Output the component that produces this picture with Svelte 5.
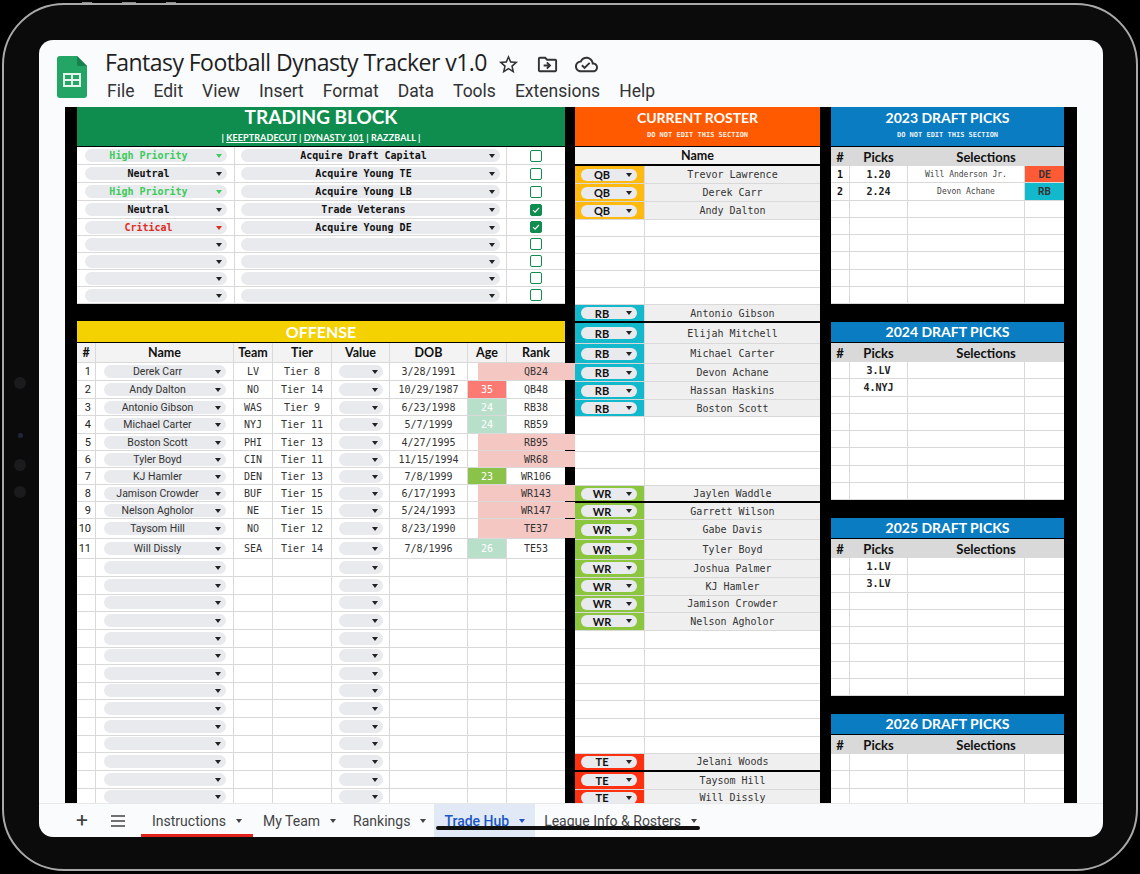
<script>
  // every sheet row from y=147 down, all three panels share these heights
  const rowH = [18,18,18,18,17,17,17,17,17,18,21,20,18,18,17,18,17,17,17,17,17,20,19.5,18,18,17,18,18,17,18,17,18,18,17,18,18,17];

  const menus = ['File','Edit','View','Insert','Format','Data','Tools','Extensions','Help'];

  const block = [
    ['High Priority','Acquire Draft Capital',false,'hi'],
    ['Neutral','Acquire Young TE',false,''],
    ['High Priority','Acquire Young LB',false,'hi'],
    ['Neutral','Trade Veterans',true,''],
    ['Critical','Acquire Young DE',true,'crit'],
    ['','',false,''],['','',false,''],['','',false,''],['','',false,'']
  ];

  const players = [
    ['Derek Carr','LV','Tier 8','3/28/1991',32,'QB24'],
    ['Andy Dalton','NO','Tier 14','10/29/1987',35,'QB48'],
    ['Antonio Gibson','WAS','Tier 9','6/23/1998',24,'RB38'],
    ['Michael Carter','NYJ','Tier 11','5/7/1999',24,'RB59'],
    ['Boston Scott','PHI','Tier 13','4/27/1995',28,'RB95'],
    ['Tyler Boyd','CIN','Tier 11','11/15/1994',28,'WR68'],
    ['KJ Hamler','DEN','Tier 13','7/8/1999',23,'WR106'],
    ['Jamison Crowder','BUF','Tier 15','6/17/1993',29,'WR143'],
    ['Nelson Agholor','NE','Tier 15','5/24/1993',29,'WR147'],
    ['Taysom Hill','NO','Tier 12','8/23/1990',32,'TE37'],
    ['Will Dissly','SEA','Tier 14','7/8/1996',26,'TE53']
  ];
  const offenseRows = rowH.slice(12).map((h, i) => ({ h, p: players[i] }));

  function ageClass(a) {
    if (a >= 35) return 'old';
    if (a >= 28) return 'mid';
    if (a <= 23) return 'young';
    return 'ok';
  }

  const roster = [
    ...['Trevor Lawrence','Derek Carr','Andy Dalton'].map((n) => ['QB', n]),
    ...Array(5).fill(['', '']),
    ...['Antonio Gibson','Elijah Mitchell','Michael Carter','Devon Achane','Hassan Haskins','Boston Scott'].map((n) => ['RB', n]),
    ...Array(4).fill(['', '']),
    ...['Jaylen Waddle','Garrett Wilson','Gabe Davis','Tyler Boyd','Joshua Palmer','KJ Hamler','Jamison Crowder','Nelson Agholor'].map((n) => ['WR', n]),
    ...Array(7).fill(['', '']),
    ...['Jelani Woods','Taysom Hill','Will Dissly'].map((n) => ['TE', n])
  ].map((r, i) => ({ pos: r[0], name: r[1], h: rowH[i + 1], line: i === 8 || i === 18 || i === 33 }));

  const drafts = [
    { year: 2023, note: true, rows: [['1','1.20','Will Anderson Jr.','DE'],['2','2.24','Devon Achane','RB']] },
    { year: 2024, rows: [['','3.LV'],['','4.NYJ']] },
    { year: 2025, rows: [['','1.LV'],['','3.LV']] },
    { year: 2026, rows: [] }
  ];
  const eight = [0,1,2,3,4,5,6,7];

  const tabs = ['Instructions','My Team','Rankings','Trade Hub','League Info & Rosters'];
</script>

{#snippet chip(text, cls)}
  <div class="chip {cls}"><span class="chip-text">{text}</span><i class="arrow"></i></div>
{/snippet}

<div class="device">
  <i class="tick t1"></i><i class="tick t2"></i><i class="tick t3"></i>
  <i class="dot d1"></i><i class="dot d2"></i><i class="dot d3"></i><i class="dot d4"></i>

  <div class="screen">
    <header class="top">
      <svg class="logo" viewBox="0 0 30 42">
        <path d="M3 0h17l10 10v29a3 3 0 0 1-3 3H3a3 3 0 0 1-3-3V3a3 3 0 0 1 3-3z" fill="#23a566"/>
        <path d="M20 0l10 10H22a2 2 0 0 1-2-2z" fill="#17804c"/>
        <path d="M6 17h18v14H6zM8 19v4h6v-4zm8 0v4h6v-4zM8 25v4h6v-4zm8 0v4h6v-4z" fill="#e6f4ec" fill-rule="evenodd"/>
      </svg>
      <div class="top-text">
        <div class="title-row">
          <h1>Fantasy Football Dynasty Tracker v1.0</h1>
          <svg class="tool star" viewBox="0 0 24 24"><path d="M22 9.24l-7.19-.62L12 2 9.19 8.63 2 9.24l5.46 4.73L5.82 21 12 17.27 18.18 21l-1.63-7.03L22 9.24zM12 15.4l-3.76 2.27 1-4.28-3.32-2.88 4.38-.38L12 6.1l1.71 4.04 4.38.38-3.32 2.88 1 4.28L12 15.4z"/></svg>
          <svg class="tool" viewBox="0 0 24 24"><path d="M20 6h-8l-2-2H4c-1.1 0-1.99.9-1.99 2L2 18c0 1.1.9 2 2 2h16c1.1 0 2-.9 2-2V8c0-1.1-.9-2-2-2zm0 12H4V6h5.17l2 2H20v10zm-7.84-6H8v2h4.16l-1.59 1.59L11.99 17 16 13.01 11.99 9l-1.41 1.41L12.16 12z"/></svg>
          <svg class="tool" viewBox="0 0 24 24"><path d="M19.35 10.04C18.67 6.59 15.64 4 12 4 9.11 4 6.6 5.64 5.35 8.04 2.34 8.36 0 10.91 0 14c0 3.31 2.69 6 6 6h13c2.76 0 5-2.24 5-5 0-2.64-2.05-4.78-4.65-4.96zM19 18H6c-2.21 0-4-1.79-4-4 0-2.05 1.53-3.76 3.56-3.97l1.07-.11.5-.95C8.08 7.14 9.94 6 12 6c2.62 0 4.88 1.86 5.39 4.43l.3 1.5 1.53.11c1.56.1 2.78 1.41 2.78 2.96 0 1.65-1.35 3-3 3zm-9-3.82l-2.09-2.09L6.5 13.5 10 17l6.01-6.01-1.41-1.41z"/></svg>
        </div>
        <nav class="menu">
          {#each menus as m}<span>{m}</span>{/each}
        </nav>
      </div>
    </header>

    <main class="sheet">
      <section class="left">
        <div class="band green">
          <div class="band-title">TRADING BLOCK</div>
          <div class="links">| <u>KEEPTRADECUT</u> | <u>DYNASTY 101</u> | RAZZBALL |</div>
        </div>
        <div class="white">
          {#each block as b, i}
            <div class="row trade" style="height: {rowH[i]}px">
              <div class="cell">{@render chip(b[0], 'status ' + b[3])}</div>
              <div class="cell">{@render chip(b[1], 'goal')}</div>
              <div class="cell last">
                <span class="check" class:on={b[2]}>
                  {#if b[2]}<svg viewBox="0 0 12 12"><path d="M2.5 6.2l2.4 2.4 4.6-5" fill="none" stroke="#fff" stroke-width="1.4"/></svg>{/if}
                </span>
              </div>
            </div>
          {/each}
        </div>

        <div class="band yellow offense-title">OFFENSE</div>
        <div class="white">
          <div class="row offense head">
            <div class="cell">#</div><div class="cell">Name</div><div class="cell">Team</div><div class="cell">Tier</div>
            <div class="cell">Value</div><div class="cell">DOB</div><div class="cell">Age</div><div class="cell last">Rank</div>
          </div>
          {#each offenseRows as r, i}
            <div class="row offense" style="height: {r.h}px">
              <div class="cell num">{r.p ? i + 1 : ''}</div>
              <div class="cell">{@render chip(r.p ? r.p[0] : '', 'player')}</div>
              <div class="cell mono">{r.p ? r.p[1] : ''}</div>
              <div class="cell mono">{r.p ? r.p[2] : ''}</div>
              <div class="cell">{@render chip('', 'value')}</div>
              <div class="cell mono">{r.p ? r.p[3] : ''}</div>
              <div class="cell age {r.p ? ageClass(r.p[4]) : ''}">{r.p ? r.p[4] : ''}</div>
              <div class="cell mono last">{r.p ? r.p[5] : ''}</div>
            </div>
          {/each}
        </div>
      </section>

      <section class="mid">
        <div class="band orange">
          <div class="band-title small">CURRENT ROSTER</div>
          <div class="note">DO NOT EDIT THIS SECTION</div>
        </div>
        <div class="white">
          <div class="roster-head">Name</div>
          {#each roster as r}
            <div class="row roster" class:line={r.line} style="height: {r.h}px">
              <div class="cell pos {r.pos}">
                {#if r.pos}{@render chip(r.pos, 'pos-chip')}{/if}
              </div>
              <div class="cell mono last" class:filled={r.pos}>{r.name}</div>
            </div>
          {/each}
        </div>
      </section>

      <section class="right">
        {#each drafts as d}
          <div class="draft">
            <div class="band blue" class:tall={d.note}>
              <div class="band-title small">{d.year} DRAFT PICKS</div>
              {#if d.note}<div class="note">DO NOT EDIT THIS SECTION</div>{/if}
            </div>
            <div class="row picks head">
              <div class="cell">#</div><div class="cell">Picks</div><div class="cell wide">Selections</div>
            </div>
            {#each eight as n}
              {@const p = d.rows[n]}
              <div class="row picks body">
                <div class="cell pick-no">{p ? p[0] : ''}</div>
                <div class="cell pick">{p ? p[1] : ''}</div>
                <div class="cell who">{p && p[2] ? p[2] : ''}</div>
                <div class="cell tag {p && p[3] ? p[3] : ''}">{p && p[3] ? p[3] : ''}</div>
              </div>
            {/each}
          </div>
        {/each}
      </section>
    </main>

    <footer class="tabs">
      <span class="add">+</span>
      <svg class="all" viewBox="0 0 14 12"><path d="M0 1h14M0 6h14M0 11h14" stroke="#444" stroke-width="1.5"/></svg>
      <div class="tab-list">
        {#each tabs as t, i}
          <div class="tab" class:first={i === 0} class:active={t === 'Trade Hub'}>{t}<i class="arrow"></i></div>
        {/each}
      </div>
    </footer>
    <div class="home-bar"></div>
  </div>
</div>

<style>
  :global(body) {
    background: #000;
  }

  .device {
    position: relative;
    box-sizing: border-box;
    width: 1136px;
    height: 868px;
    margin: 3px 2px;
    padding: 35px 33px 32px 35px;
    background: #0b0b0b;
    border: 2px solid #a9a9a9;
    border-radius: 62px;
  }

  .tick {
    position: absolute;
    top: -3px;
    width: 10px;
    height: 1px;
    background: #8a8a8a;
  }
  .t1 { left: 78px; }
  .t2 { left: 118px; width: 14px; }
  .t3 { left: 162px; }

  .dot {
    position: absolute;
    left: 10px;
    width: 12px;
    height: 12px;
    border-radius: 50%;
    background: #1b1b1d;
  }
  .d1 { top: 372px; }
  .d2 { top: 428px; left: 14px; width: 5px; height: 5px; background: #20263a; }
  .d3 { top: 454px; }
  .d4 { top: 481px; }

  .screen {
    position: relative;
    display: flex;
    flex-direction: column;
    height: 100%;
    background: #f9fbfd;
    border-radius: 14px;
    overflow: hidden;
  }

  .top {
    display: flex;
    height: 67px;
    flex: none;
    padding-left: 18px;
    box-sizing: border-box;
  }

  .logo {
    width: 30px;
    height: 42px;
    margin-top: 16px;
    flex: none;
  }

  .top-text {
    margin-left: 18px;
  }

  .title-row {
    display: flex;
    align-items: center;
    height: 24px;
    margin-top: 10px;
  }

  h1 {
    margin: 0;
    width: 392px;
    font: 400 23px/24px "Open Sans", sans-serif;
    letter-spacing: -0.55px;
    color: #1f1f1f;
    white-space: nowrap;
  }

  .tool {
    width: 23px;
    height: 23px;
    margin-right: 16px;
    fill: #333;
    margin-top: 4px;
  }

  .menu {
    display: flex;
    gap: 19px;
    margin: 6px 0 0 2px;
    font: 400 17.5px/22px Roboto, sans-serif;
    color: #333;
  }

  .sheet {
    flex: 1;
    min-height: 0;
    display: flex;
    margin: 0 26px;
    padding: 0 13px 0 12px;
    background: #000;
    overflow: hidden;
  }

  .left { width: 488px; flex: none; }
  .mid { width: 245px; margin-left: 10px; flex: none; }
  .right { width: 233px; margin-left: 11px; flex: none; }

  .white { background: #fff; }

  .band {
    box-sizing: border-box;
    color: #fff;
    text-align: center;
    font-family: Lato, sans-serif;
    font-weight: 700;
  }

  .green { background: #0f8d4e; height: 40px; border-bottom: 1px solid #000; }
  .orange { background: #ff5a00; height: 40px; border-bottom: 1px solid #000; }
  .blue { background: #0a7cc1; height: 20px; margin-bottom: 1px; }
  .blue.tall { height: 39px; }
  .yellow { background: #f4d100; }

  .band-title {
    font-size: 19px;
    line-height: 20px;
  }
  .band-title.small {
    font-size: 14px;
    line-height: 20px;
  }
  .orange .band-title.small,
  .tall .band-title.small {
    padding-top: 1px;
  }

  .links {
    font-size: 9px;
    line-height: 12px;
    margin-top: 5px;
    letter-spacing: 0.1px;
  }

  .note {
    font: 700 7px/10px "DejaVu Sans Mono", monospace;
    margin-top: 2px;
    opacity: 0.9;
  }

  .offense-title {
    margin-top: 17px;
    height: 22px;
    font-size: 16px;
    line-height: 22px;
    border-bottom: 1px solid #000;
  }

  .row {
    display: grid;
    box-sizing: border-box;
    border-bottom: 1px solid #d9d9d9;
  }

  .cell {
    display: flex;
    align-items: center;
    justify-content: center;
    min-width: 0;
    border-right: 1px solid #d9d9d9;
    white-space: nowrap;
  }
  .cell.last { border-right: 0; }

  .trade { grid-template-columns: 158px 272px 58px; }
  .offense { grid-template-columns: 19px 138px 39px 59px 58px 78px 39px 58px; }

  .head {
    height: 20px;
    background: #f3f3f3;
    font: 700 12.5px Lato, sans-serif;
    color: #111;
  }

  .mono {
    font: 400 10px "DejaVu Sans Mono", monospace;
    color: #333;
  }

  .num {
    font: 400 11px Roboto, sans-serif;
    color: #222;
    justify-content: flex-end;
    padding-right: 4px;
  }

  .age {
    font: 400 10px "DejaVu Sans Mono", monospace;
    color: #fff;
  }
  .age.mid { background: #f4c7c3; }
  .age.old { background: #fb7b74; }
  .age.ok { background: #b7dfca; }
  .age.young { background: #8bc34a; }

  .chip {
    position: relative;
    display: flex;
    align-items: center;
    justify-content: center;
    box-sizing: border-box;
    height: 13px;
    background: #e8eaed;
    border-radius: 7px;
    padding-right: 14px;
  }
  .chip-text { white-space: nowrap; }

  .arrow {
    display: inline-block;
    width: 0;
    height: 0;
    border: 3.5px solid transparent;
    border-top: 4px solid currentColor;
    border-bottom: 0;
  }
  .chip .arrow {
    position: absolute;
    right: 5px;
    top: 5px;
    color: #222;
  }

  .status {
    width: 142px;
    font: 700 10px "DejaVu Sans Mono", monospace;
    color: #111;
  }
  .status.hi, .status.hi .arrow { color: #3ecb5c; }
  .status.crit, .status.crit .arrow { color: #e02a1e; }

  .goal {
    width: 259px;
    font: 700 10px "DejaVu Sans Mono", monospace;
    color: #111;
  }

  .check {
    box-sizing: border-box;
    width: 12px;
    height: 12px;
    border: 1.5px solid #0f8d4e;
    border-radius: 2px;
    display: flex;
  }
  .check.on { background: #0f8d4e; }
  .check svg { width: 100%; height: 100%; }

  .player {
    width: 122px;
    font: 400 10.5px Roboto, sans-serif;
    color: #333;
    margin-left: 0;
  }
  .value { width: 44px; }

  .roster-head {
    box-sizing: border-box;
    height: 19px;
    background: #f3f3f3;
    border-bottom: 2px solid #000;
    text-align: center;
    font: 700 12.5px/17px Lato, sans-serif;
    color: #111;
  }

  .roster { grid-template-columns: 70px 175px; }
  .roster.line { border-bottom: 2px solid #000; }
  .filled { background: #efefef; }

  .pos.QB { background: #ffb90f; }
  .pos.RB { background: #12b9cc; }
  .pos.WR { background: #8cc63f; }
  .pos.TE { background: #ff3010; }

  .pos-chip {
    width: 56px;
    height: 12px;
    font: 700 11px Lato, sans-serif;
    color: #111;
    padding-right: 14px;
    margin-left: -1px;
  }
  .pos-chip .arrow { top: 4px; }

  .draft { margin-bottom: 18px; }

  .picks { grid-template-columns: 19px 58px 117px 39px; }
  .picks.head {
    height: 19px;
    background: #d9d9d9;
    grid-template-columns: 19px 58px 156px;
    border-bottom: 0;
    font-size: 13px;
  }
  .head .wide { border-right: 0; padding-right: 0; }
  .picks.body {
    height: 17.25px;
    background: #fff;
  }
  .pick-no {
    font: 700 10px "DejaVu Sans Mono", monospace;
    color: #111;
  }
  .pick {
    font: 700 10px "DejaVu Sans Mono", monospace;
    color: #222;
  }
  .who {
    font: 400 8px "DejaVu Sans Mono", monospace;
    color: #444;
  }
  .tag {
    border-right: 0;
    font: 700 10px Roboto, sans-serif;
    color: #333;
  }
  .tag.DE { background: #ff5a36; }
  .tag.RB { background: #12b9cc; }

  .tabs {
    flex: none;
    display: flex;
    align-items: stretch;
    height: 34px;
    border-top: 1px solid #e6e8ea;
    box-sizing: border-box;
    color: #444;
    font: 400 14px Roboto, sans-serif;
  }

  .add {
    margin-left: 36px;
    width: 14px;
    font-size: 21px;
    line-height: 33px;
    text-align: center;
    color: #444;
  }

  .all {
    width: 14px;
    height: 12px;
    margin: 11px 0 0 22px;
  }

  .tab-list {
    display: flex;
    margin-left: 16px;
  }

  .tab {
    display: flex;
    align-items: center;
    gap: 10px;
    padding: 0 8px 0 9px;
    height: 33px;
    box-sizing: border-box;
  }
  .tab .arrow { margin-top: 1px; color: #444; }

  .tab.first {
    padding: 0 11px 0 11px;
    box-shadow: inset 0 -3px 0 #e0211c;
    margin-right: 1px;
  }

  .tab.active {
    background: #e1e9f7;
    color: #1a56c4;
    padding: 0 10px;
    font-weight: 500;
  }
  .tab.active .arrow { color: #1a56c4; }

  .home-bar {
    position: absolute;
    left: 397px;
    top: 786px;
    width: 264px;
    height: 4px;
    background: #111;
    border-radius: 2px;
  }
</style>
